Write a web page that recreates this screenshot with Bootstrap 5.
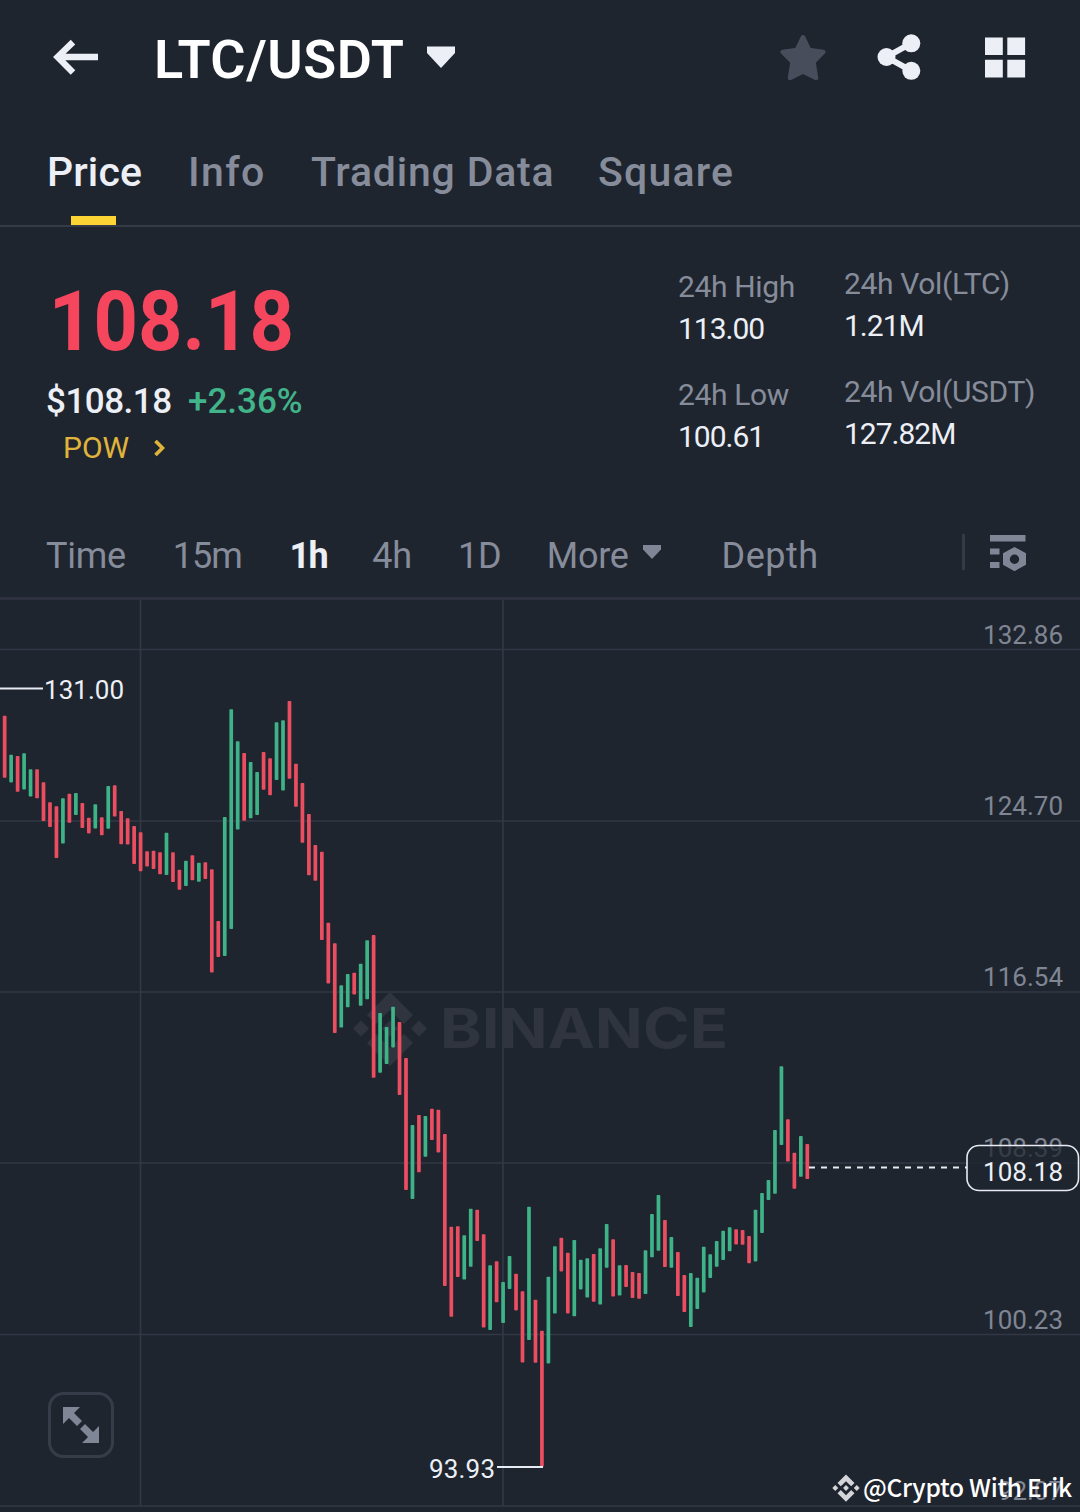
<!DOCTYPE html>
<html lang="en">
<head>
<meta charset="utf-8">
<meta name="viewport" content="width=device-width, initial-scale=1">
<title>LTC/USDT</title>
<link href="https://cdn.jsdelivr.net/npm/bootstrap@5.3.0/dist/css/bootstrap.min.css" rel="stylesheet">
<style>
:root{--ink:#1f252f;--line:#343a46;--muted:#868c9a;--light:#eceff5;--up:#41b489;--down:#f6465d}
body{background:var(--ink);color:var(--light);font-family:Roboto,"Liberation Sans",sans-serif;width:1080px;height:1512px;overflow:hidden}
svg{display:block;flex:none}
.topbar{height:116px;padding:0 54px 2px 53px}
.pair{font-size:54px;font-weight:600;line-height:60px;color:#fff;width:250px;margin-left:56px;padding-top:5px;letter-spacing:.5px;white-space:nowrap}
.caret{margin-left:23px}
.share{margin-left:51px}
.tiles{margin-left:64px}
.tabs{height:111px;border-bottom:2px solid var(--line);padding-left:47px}
.tabs .nav-link{padding:0;height:109px;line-height:112px;font-size:41px;font-weight:500;color:var(--muted);white-space:nowrap;position:relative;letter-spacing:.8px}
.tabs .nav-link.active{color:var(--light);letter-spacing:.1px}
.tabs .nav-link.active::after{content:"";position:absolute;left:24px;bottom:0;width:45px;height:9px;background:#fcd535}
.t1{width:141px}.tabs .t2{width:123px;letter-spacing:1.4px}.t3{width:287px}.tabs .t4{letter-spacing:1.2px}
.summary{height:273px;padding:0 0 0 47px}
.last{font-size:83px;font-weight:700;line-height:90px;color:var(--down);margin-top:50px;transform:scaleX(.935);transform-origin:0 50%;padding-left:2px}
.fiat{font-size:35px;font-weight:500;line-height:52px;height:50px;margin-top:9px;letter-spacing:-.5px}
.fiat span{display:inline-block;width:142px}
.fiat .worth{margin-left:-1px}
.fiat .gain{color:var(--up);letter-spacing:0}
.tagline{font-size:30px;line-height:44px;height:44px;color:#e0b43b;padding-left:16px}
.tagline span{width:91px}
.quote{width:631px}
.stats{font-size:30px;line-height:42px;padding-top:39px;width:166px;white-space:nowrap;letter-spacing:-.35px}
.stats dt{font-weight:400;color:var(--muted)}
.stats dd{margin:0 0 24px;letter-spacing:-1px}
.stats.vol{padding-top:36px;width:200px}
.periods{height:100px;padding:14px 54px 0 46px;border-bottom:3px solid #2c313d;font-size:36px;color:var(--muted);white-space:nowrap;letter-spacing:-.3px}
.periods b{color:var(--light);font-weight:700;letter-spacing:-1.5px}
.p1{width:127px}.p2{width:117px;letter-spacing:-1px}.p3{width:83px}.p4{width:86px}.p5{width:89px}.p6{width:96px}.p7{width:18px;margin:0 61px 7px 0}.p8{width:241px;letter-spacing:.5px}.tune{margin-bottom:7px}
</style>
<script src="https://cdn.jsdelivr.net/npm/bootstrap@5.3.0/dist/js/bootstrap.bundle.min.js"></script>
</head>
<body>
<header class="topbar d-flex align-items-center">
  <svg width="45" height="36" viewBox="0 0 45 36" fill="none" stroke="#eceff5" stroke-width="6.4"><path d="M45 18H6M20 3.100 4.600 18 20 33.500"/></svg>
  <div class="pair">LTC/USDT</div>
  <svg class="caret" width="28" height="22" viewBox="0 0 28 22"><path fill="#eceff5" d="M0 .5h28v6.500L14 22 0 7z"/></svg>
  <svg class="ms-auto" width="46" height="46" viewBox="0 0 46 46"><path fill="#474d5a" stroke="#474d5a" stroke-width="4.500" stroke-linejoin="round" d="M23 3.300 29.200 16 43.300 18 33.500 28 36 44 23 37.500 10 44 12.500 28 2.700 18 16.800 16z"/></svg>
  <svg class="share" width="44" height="46" viewBox="0 0 44 46"><path stroke="#eceff5" stroke-width="6" fill="none" d="M34 9.300 9.500 23 34 36.700"/><g fill="#eceff5"><circle cx="9.500" cy="23" r="9"/><circle cx="34.300" cy="9.300" r="9"/><circle cx="34.300" cy="36.800" r="9"/></g></svg>
  <svg class="tiles" width="41" height="41" viewBox="0 0 41 41"><path fill="#eceff5" d="M0 .5h17.800v17.500H0zM22.300.500h17.800v17.500H22.300zM0 22.800h17.800v17.700H0zM22.300 22.800h17.800v17.700H22.300z"/></svg>
</header>

<nav class="tabs nav flex-nowrap">
  <a class="nav-link active t1">Price</a>
  <a class="nav-link t2">Info</a>
  <a class="nav-link t3">Trading Data</a>
  <a class="nav-link t4">Square</a>
</nav>

<section class="summary d-flex">
  <div class="quote">
    <div class="last">108.18</div>
    <div class="fiat"><span class="worth">$108.18</span><span class="gain">+2.36%</span></div>
    <div class="tagline d-flex align-items-center"><span>POW</span><svg width="11" height="17" viewBox="0 0 11 17" fill="none" stroke="#e0b43b" stroke-width="3.600"><path d="M1.500 1 8.500 8 1.500 15"/></svg></div>
  </div>
  <dl class="stats mb-0"><dt>24h High</dt><dd>113.00</dd><dt>24h Low</dt><dd>100.61</dd></dl>
  <dl class="stats vol mb-0"><dt>24h Vol(LTC)</dt><dd>1.21M</dd><dt>24h Vol(USDT)</dt><dd>127.82M</dd></dl>
</section>

<div class="periods d-flex align-items-center">
  <span class="p1">Time</span><span class="p2">15m</span><b class="p3">1h</b><span class="p4">4h</span><span class="p5">1D</span><span class="p6">More</span>
  <svg class="p7" width="18" height="14" viewBox="0 0 18 14"><path fill="#7f8695" d="M0 0h18v4.500L9 14 0 4.500z"/></svg>
  <span class="p8">Depth</span>
  <svg class="tune" width="64" height="38" viewBox="0 0 64 38"><path fill="#343a46" d="M0 1h3v36H0z"/><path fill="#7f8695" fill-rule="evenodd" d="M28 2h35.500v6.500H28zM28 15.500h9.500v6H28zM28 29h9.500v6H28zM52.500 14l11.500 6.300v11.500L52.500 38.200l-11.500-6.400V20.300zM52.500 21.500a4.700 4.700 0 1 0 0 9.400 4.700 4.700 0 0 0 0-9.400z"/></svg>
</div>

<svg id="chart" width="1080" height="912" viewBox="0 600 1080 912" font-family="Roboto, 'Liberation Sans', sans-serif" font-size="26">
  <path stroke="#323844" stroke-width="1.700" fill="none" d="M0 649.500H1080M0 821H1080M0 992H1080M0 1163H1080M0 1334.500H1080M0 1506H1080M140.500 600V1506M503 600V1506"/>
  <g fill="#2f343f">
    <path d="M390 992 413 1015 404 1024 390 1010 376 1024 367 1015zM390 1066 413 1043 404 1034 390 1048 376 1034 367 1043zM361 1020.500 369 1028.500 361 1036.500 353 1028.500zM419 1020.500 427 1028.500 419 1036.500 411 1028.500zM390 1020.500 398 1028.500 390 1036.500 382 1028.500z"/>
    <text x="440" y="1048" font-family="Inter, sans-serif" font-weight="700" font-size="55" textLength="288" lengthAdjust="spacingAndGlyphs">BINANCE</text>
  </g>
  <g fill="#7f8593">
    <text x="983" y="644" textLength="80">132.86</text>
    <text x="983" y="815" textLength="80">124.70</text>
    <text x="983" y="986" textLength="80">116.54</text>
    <text x="983" y="1157" textLength="80">108.39</text>
    <text x="983" y="1329" textLength="80">100.23</text>
    <text x="998" y="1500" textLength="65">92.07</text>
  </g>
  <g id="candles"></g>
  <g stroke="#e8ebf1" stroke-width="2" fill="none">
    <path d="M0 688.500H43M497 1467H543"/>
    <path stroke-dasharray="6 6" d="M809 1167.500H967"/>
    <rect x="967" y="1145.500" width="111.500" height="45" rx="12" stroke-width="1.600" fill="#1f252f" fill-opacity=".75"/>
  </g>
  <g fill="#eceff5">
    <text x="44" y="699" textLength="80">131.00</text>
    <text x="429" y="1478" textLength="66">93.93</text>
    <text x="983" y="1181" textLength="80">108.18</text>
  </g>
  <rect x="49.500" y="1393.500" width="63" height="63" rx="14" fill="#1f252f" stroke="#363c48" stroke-width="3"/>
  <path fill="#7f8695" d="M63 1407h17l-6 6 8 8-5 5-8-8-6 6zM99 1443H82l6-6-8-8 5-5 8 8 6-6z"/>
  <g fill="#d3d5d9" transform="translate(846 1488) scale(.37) translate(-390 -1028.500)">
    <path d="M390 992 413 1015 404 1024 390 1010 376 1024 367 1015zM390 1066 413 1043 404 1034 390 1048 376 1034 367 1043zM361 1020.500 369 1028.500 361 1036.500 353 1028.500zM419 1020.500 427 1028.500 419 1036.500 411 1028.500zM390 1020.500 398 1028.500 390 1036.500 382 1028.500z"/>
  </g>
  <text x="863" y="1497" fill="#fff" font-family="'Noto Sans CJK SC', 'Noto Sans', sans-serif" font-weight="500" font-size="24.500" textLength="209">@Crypto With Erik</text>
</svg>

<script>
// One entry per hour: direction (r = down, g = up), high and low in thirds of a pixel below y = 680.
const bars = `r107-293 g224-307 r228-335 g220-329 g268-350 r268-355 r307-423 r367-441 r379-534 g355-491
r341-428 g339-405 r369-444 r413-460 g373-446 r412-466 g318-446 r316-410 r393-493 r415-494
r438-552 r457-574 r514-560 r512-567 r517-583 g458-585 r517-606 r569-629 g542-618 r526-601
g548-605 r547-597 r568-878 r723-831 g411-828 g88-747 g184-449 r219-422 g246-415 g276-405
r216-329 r235-346 g127-300 g121-332 r63-296 r251-380 r309-488 r402-586 r495-602 r515-780
r728-910 r790-1059 g916-1043 g882-982 r878-943 g851-977 g781-958 r765-1193 g999-1178 g1041-1152
g980-1102 r1026-1245 r1134-1530 g1335-1557 r1305-1477 g1308-1430 r1286-1380 r1289-1417 r1362-1818 r1640-1910
r1639-1791 g1666-1799 g1586-1760 r1589-1683 r1663-1943 g1756-1950 r1744-1867 g1806-1929 g1728-1827 r1781-1891
r1834-2048 g1580-1980 r1859-2048 r1952-2360 g1790-2050 g1699-1901 r1673-1774 r1718-1900 g1680-1909 g1739-1828
g1735-1853 r1722-1865 g1705-1874 g1632-1763 r1678-1850 g1756-1847 r1755-1821 r1776-1854 r1779-1856 g1711-1842
g1602-1732 g1545-1712 r1620-1761 g1671-1763 r1716-1848 r1785-1896 g1779-1941 g1793-1887 g1700-1837 g1723-1794
g1683-1760 g1652-1740 g1642-1714 r1648-1694 r1650-1694 r1668-1750 g1589-1744 g1539-1659 g1500-1560 g1350-1541
g1159-1395 r1318-1445 r1418-1526 g1368-1490 r1392-1497`.split(/\s+/);
document.getElementById('candles').innerHTML = bars.map((b, i) => {
  const [hi, lo] = b.slice(1).split('-').map(v => 680 + v / 3);
  const x = 4.67 + i * 6.473 - 1.85;
  return `<rect x="${x.toFixed(2)}" y="${hi.toFixed(1)}" width="3.7" height="${(lo - hi).toFixed(1)}" rx=".8" fill="${b[0] === 'g' ? '#3eb388' : '#ec4e61'}"/>`;
}).join('');
</script>
</body>
</html>
